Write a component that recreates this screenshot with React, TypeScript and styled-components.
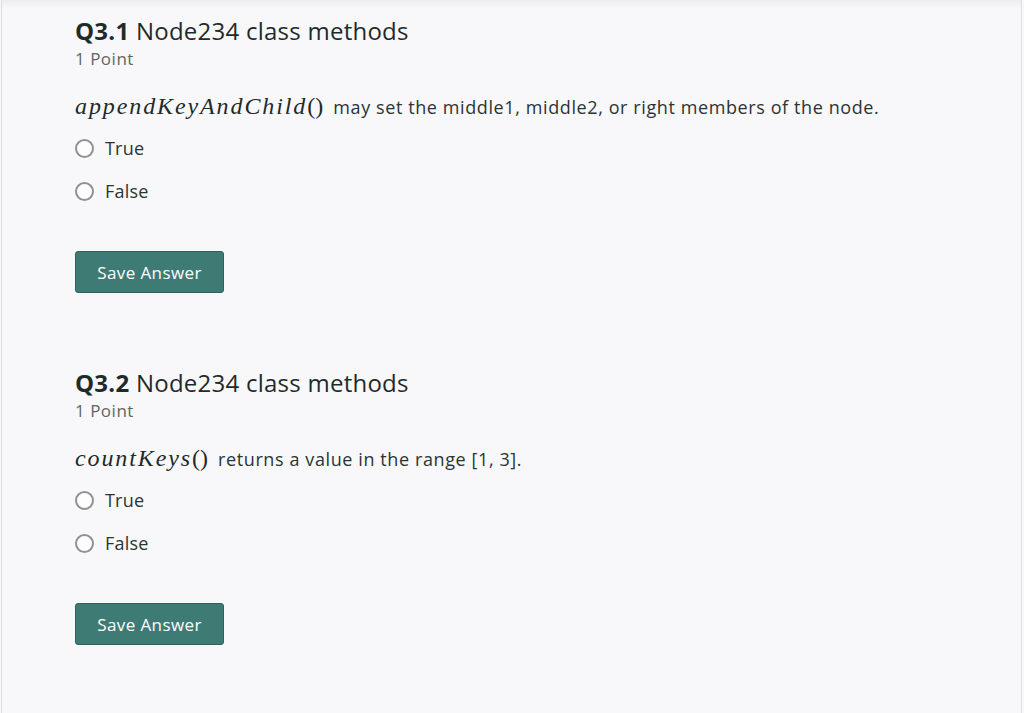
import React from "react";
import styled, { createGlobalStyle } from "styled-components";

const Global = createGlobalStyle`
  html, body { margin: 0; padding: 0; background: #f8f8fa; }
  body { font-family: "Open Sans", Lato, sans-serif; color: #27302f; }
`;

const Frame = styled.div`
  box-sizing: border-box;
  height: 713px;
  background: #f8f8fa;
  border-left: 1px solid #dcdde0;
  border-right: 1px solid #dcdde0;
  margin-left: 1px;
  width: 1021px;
  position: relative;
  overflow: hidden;
  &::before {
    content: "";
    position: absolute;
    left: 0; right: 0; top: 0; height: 8px;
    background: linear-gradient(#ececef, rgba(248,248,250,0));
  }
`;

const Content = styled.div`
  padding: 16px 0 0 73px;
  display: flex;
  flex-direction: column;
`;

const Question = styled.section`
  display: flex;
  flex-direction: column;
  height: 352px;
`;

const Title = styled.h2`
  margin: 0;
  font-size: 24px;
  font-weight: 400;
  line-height: 30px;
  letter-spacing: 0.25px;
  color: #1f2b2b;
  b { font-weight: 700; }
`;

const Points = styled.div`
  font-size: 17px;
  line-height: 22px;
  letter-spacing: 0.5px;
  color: #5d6766;
  margin-top: 2px;
`;

const Prompt = styled.p`
  margin: 24px 0 0;
  font-size: 18px;
  line-height: 26px;
  letter-spacing: 0.6px;
  color: #2b3433;
`;

const Math = styled.span`
  font-family: "Liberation Serif", "DejaVu Serif", serif;
  font-style: italic;
  font-size: 24px;
  line-height: 1;
  margin-right: 10px;
  letter-spacing: 1.9px;
  color: #222a2a;
`;

const Paren = styled.span`
  font-style: normal;
  letter-spacing: 0;
`;

const Options = styled.div`
  display: flex;
  flex-direction: column;
  gap: 17px;
  margin-top: 15px;
`;

const Option = styled.label`
  display: flex;
  align-items: center;
  gap: 11px;
  font-size: 18px;
  line-height: 26px;
  letter-spacing: 0.2px;
  color: #2b3433;
`;

const Radio = styled.span`
  box-sizing: border-box;
  width: 19px;
  height: 19px;
  border-radius: 50%;
  border: 2px solid #8e9392;
  background: #fdfdfd;
`;

const SaveButton = styled.button`
  margin-top: 47px;
  align-self: flex-start;
  width: 149px;
  height: 42px;
  background: #3f7b75;
  color: #ffffff;
  border: 1px solid #2f625d;
  border-radius: 3px;
  font-family: "Open Sans", Lato, sans-serif;
  font-size: 17px;
  letter-spacing: 0.4px;
`;

const questions = [
  {
    num: "Q3.1",
    fn: "appendKeyAndChild",
    text: "may set the middle1, middle2, or right members of the node.",
  },
  {
    num: "Q3.2",
    fn: "countKeys",
    text: "returns a value in the range [1, 3].",
  },
];

export default function App() {
  return (
    <>
      <Global />
      <Frame>
        <Content>
          {questions.map((q) => (
            <Question key={q.num}>
              <Title>
                <b>{q.num}</b> Node234 class methods
              </Title>
              <Points>1 Point</Points>
              <Prompt>
                <Math>
                  {q.fn}
                  <Paren>()</Paren>
                </Math>
                {q.text}
              </Prompt>
              <Options>
                <Option>
                  <Radio />
                  True
                </Option>
                <Option>
                  <Radio />
                  False
                </Option>
              </Options>
              <SaveButton>Save Answer</SaveButton>
            </Question>
          ))}
        </Content>
      </Frame>
    </>
  );
}
